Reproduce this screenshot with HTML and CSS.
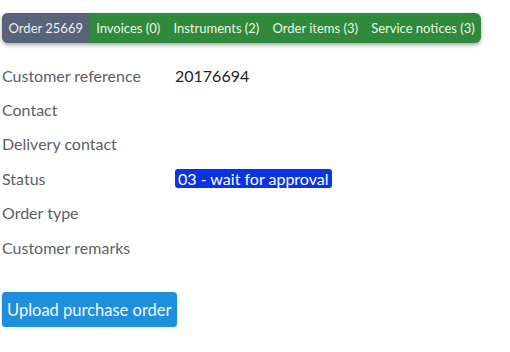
FILE: index.html
```html
<!DOCTYPE html>
<html lang="en">
<head>
  <meta charset="UTF-8">
  <meta name="viewport" content="width=device-width, initial-scale=1.0">
  <title>Order 25669</title>
  <link rel="stylesheet" href="styles.css">
</head>
<body>
  <div class="page">
    <!-- tabs -->
    <ul class="tabs">
      <li class="tab active">Order 25669</li>
      <li class="tab">Invoices (0)</li>
      <li class="tab">Instruments (2)</li>
      <li class="tab">Order items (3)</li>
      <li class="tab">Service notices (3)</li>
    </ul>

    <div class="details">
      <div class="label">Customer reference</div>
      <div class="value">20176694</div>
      <div class="label">Contact</div>
      <div class="value"></div>
      <div class="label">Delivery contact</div>
      <div class="value"></div>
      <div class="label">Status</div>
      <div class="value"><span class="badge">03 - wait for approval</span></div>
      <div class="label">Order type</div>
      <div class="value"></div>
      <div class="label">Customer remarks</div>
      <div class="value"></div>
    </div>

    <button class="btn-upload">Upload purchase order</button>
  </div>
</body>
</html>
```

FILE: styles.css
```css
body{
  margin: 0;
  font-family: Lato, "Open Sans", sans-serif;
  background: #fff;
}
.page{
  padding: 13px 2px 0 2px;
}
.tabs{
  list-style: none;
  margin: 0;
  padding: 0;
  display: inline-flex;
  border-radius: 6px;
  overflow: hidden;
  background-color: #2f8a3b;
  box-shadow: 0 2px 4px rgba(0,0,0,0.35);
  height: 30px;
}
.tab{
  display: flex;
  align-items: center;
  padding: 0 6.6px;
  font-size: 13px;
  color: #eef6e4;
}
.tab.active{
  background-color: #58637a;
  color: #eef0f4;
}
.details{
  display: grid;
  grid-template-columns: 173px 1fr;
  grid-auto-rows: 34.4px;
  align-items: center;
  margin-top: 15px;
  font-size: 16px;
}
.label{
  color: #5b5f66;
}
.value{
  color: #222;
}
.badge{
  display: inline-block;
  background-color: #0b33e6;
  color: #fff;
  border-radius: 3px;
  padding: 1px 3px;
  line-height: 17px;
}
.btn-upload{
  margin-top: 28px;
  font-family: inherit;
  font-size: 16.5px;
  color: #f2f7fc;
  background-color: #1e8fdc;
  border: none;
  border-radius: 4px;
  height: 35px;
  padding: 0 5px;
  box-shadow: 0 1px 2px rgba(0,0,0,0.3);
}
```
